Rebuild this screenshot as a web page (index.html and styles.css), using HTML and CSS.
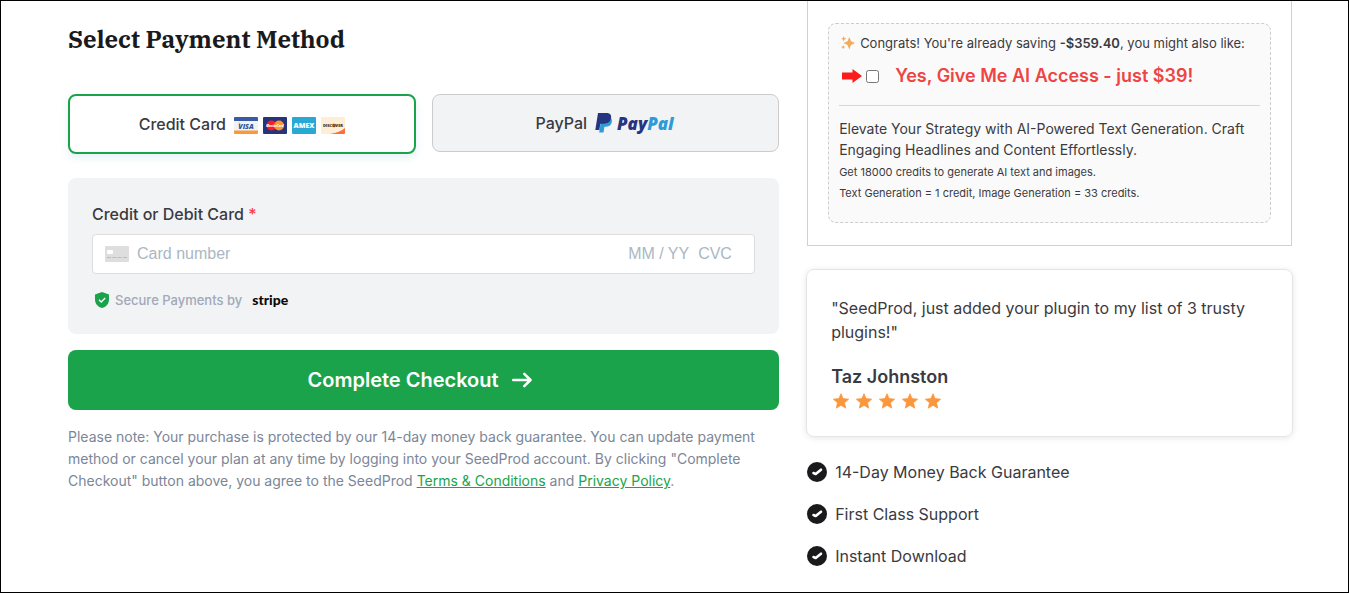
FILE: index.html
```html
<!DOCTYPE html>
<html lang="en">
<head>
<meta charset="utf-8">
<meta name="viewport" content="width=device-width, initial-scale=1">
<title>Checkout</title>
<link rel="stylesheet" href="styles.css">
</head>
<body>
<svg class="defs" aria-hidden="true">
  <symbol id="star" viewBox="0 0 24 24"><path d="M12 2.2l2.8 6.6 7.400.7-5.500 4.900 1.600 7.100-6.300-3.800-6.300 3.800 1.600-7.100-5.500-4.900 7.400-.7z" stroke-width="1" stroke-linejoin="round"/></symbol>
  <symbol id="badge" viewBox="0 0 20 20"><circle cx="10" cy="10" r="10" fill="#1a1a1c"/><path d="M14 7.700L8.700 12 6.500 11" fill="none" stroke="#fff" stroke-width="2.600" stroke-linecap="round" stroke-linejoin="round"/></symbol>
</svg>
<div class="page">
  <main class="payment">
    <h1 class="title">Select Payment Method</h1>
    <div class="methods">
      <button type="button" class="method method-active" aria-pressed="true">
        <span>Credit Card</span>
        <span class="cards">
          <svg class="card" viewBox="0 0 24 17"><rect width="24" height="17" rx="1" fill="#f1f2f4"/><path d="M0 4V1a1 1 0 0 1 1-1h22a1 1 0 0 1 1 1v3z" fill="#3a5ba3"/><path d="M0 13.500h24V16a1 1 0 0 1-1 1H1a1 1 0 0 1-1-1z" fill="#fb993a"/><path d="M4 5.800h2l.6 2z" fill="#f0a040"/><text x="12" y="11.500" class="mark mark-visa">VISA</text></svg>
          <svg class="card" viewBox="0 0 24 17"><rect width="24" height="17" rx="1" fill="#26347b"/><circle cx="8.500" cy="8.500" r="5" fill="#fb1c26"/><circle cx="16" cy="8.500" r="5" fill="#fb9632"/><text x="12" y="10" class="mark mark-mc">MasterCard</text></svg>
          <svg class="card" viewBox="0 0 24 17"><rect width="24" height="17" rx="1" fill="#28a8d2"/><text x="12" y="11" class="mark mark-amex">AMEX</text></svg>
          <svg class="card" viewBox="0 0 24 17"><rect width="24" height="17" rx="1" fill="#feeed6"/><path d="M24 11v5a1 1 0 0 1-1 1H9q10-1.500 15-6z" fill="#f9703c"/><circle cx="13" cy="8.400" r="2" fill="#fb8b30"/><text x="12" y="10" class="mark mark-disc">DISCOVER</text></svg>
        </span>
      </button>
      <button type="button" class="method" aria-pressed="false">
        <span>PayPal</span>
        <svg class="paypal" viewBox="0 0 80 22" aria-hidden="true">
          <path d="M6.500 5h8c2.500 1 2.700 3.200 2.200 5.500-.8 3-3 4.300-6.200 4.300H9.400L8.500 20.500H4.200z" fill="#2c9bd8"/>
          <path d="M3 1h8.500c3.800 0 5.200 2.200 4.500 5.300-.8 3.800-3.500 5.400-7 5.400H6.300c-.8 0-1 .4-1.100 1L4.300 18H.3z" fill="#26357f"/>
          <text x="22" y="18" class="paypal-word"><tspan fill="#26357f">Pay</tspan><tspan fill="#2c9bd8">Pal</tspan></text>
        </svg>
      </button>
    </div>
    <section class="panel">
      <label class="label" for="number">Credit or Debit Card <span class="req">*</span></label>
      <div class="field">
        <svg class="field-icon" viewBox="0 0 24 16" aria-hidden="true"><rect width="24" height="16" rx="1" fill="#dedede"/><rect x="2" y="4" width="6" height="4" rx="1" fill="#fff"/><path d="M2 11.500h20" stroke="#b8bdc2" stroke-width="1" stroke-dasharray="4 1.300"/></svg>
        <input class="number" id="number" type="text" placeholder="Card number">
        <input class="expiry" type="text" placeholder="MM / YY" aria-label="Expiry date">
        <input class="cvc" type="text" placeholder="CVC" aria-label="CVC">
      </div>
      <p class="secure">
        <svg class="shield" viewBox="0 0 14 16" aria-hidden="true"><path d="M7 0l7 2.500v5C14 12 11 15 7 16 3 15 0 12 0 7.500v-5z" fill="#1aa34a"/><path d="M4 7.800l2.200 2.200L10.200 6" fill="none" stroke="#fff" stroke-width="1.300"/></svg>
        <span>Secure Payments by</span>
        <b class="stripe">stripe</b>
      </p>
    </section>
    <button type="button" class="submit">
      <span>Complete Checkout</span>
      <svg class="arrow" viewBox="0 0 20 16" aria-hidden="true"><path d="M1.200 8h17M12.300 1.800L18.500 8l-6.200 6.200" fill="none" stroke="#fff" stroke-width="2.500" stroke-linecap="round" stroke-linejoin="round"/></svg>
    </button>
    <p class="note">Please note: Your purchase is protected by our 14-day money back guarantee. You can update payment method or cancel your plan at any time by logging into your SeedProd account. By clicking "Complete Checkout" button above, you agree to the SeedProd <a href="#">Terms &amp; Conditions</a> and <a href="#">Privacy Policy</a>.</p>
  </main>
  <aside class="side">
    <section class="order">
      <div class="offer">
        <p class="congrats">
          <svg class="sparkle" viewBox="0 0 14 14" aria-hidden="true"><path d="M8.300 1l1.700 4.300L14 7.100 10 8.900l-1.700 4.600-1.800-4.600-4-1.800 4-1.800zM2.700 0l.8 2 1.900.7-1.900.8-.8 1.900-.8-1.900L0 2.700 1.900 2zM2.200 9l.7 1.500 1.500.6-1.500.7-.7 1.500-.7-1.500L0 11.100l1.500-.6z" fill="#f0ac5c"/></svg>
          <span>Congrats! You're already saving <b class="saving">-$359.40</b>, you might also like:</span>
        </p>
        <div class="accept">
          <svg class="pointer" viewBox="0 0 20 14" aria-hidden="true"><path d="M0 3.500h10.500V0L20 7l-9.500 7v-3.500H0z" fill="#fb1c1c"/></svg>
          <input class="check" type="checkbox" id="ai">
          <label class="accept-label" for="ai">Yes, Give Me AI Access - just $39!</label>
        </div>
        <p class="pitch">Elevate Your Strategy with AI-Powered Text Generation. Craft Engaging Headlines and Content Effortlessly.</p>
        <p class="fine">Get 18000 credits to generate AI text and images.<br>Text Generation = 1 credit, Image Generation = 33 credits.</p>
      </div>
    </section>
    <section class="quote">
      <p class="quote-text">"SeedProd, just added your plugin to my list of 3 trusty plugins!"</p>
      <p class="quote-name">Taz Johnston</p>
      <div class="stars" role="img" aria-label="5 stars">
        <svg class="star"><use href="#star"/></svg><svg class="star"><use href="#star"/></svg><svg class="star"><use href="#star"/></svg><svg class="star"><use href="#star"/></svg><svg class="star"><use href="#star"/></svg>
      </div>
    </section>
    <ul class="perks">
      <li class="perk"><svg class="badge"><use href="#badge"/></svg>14-Day Money Back Guarantee</li>
      <li class="perk"><svg class="badge"><use href="#badge"/></svg>First Class Support</li>
      <li class="perk"><svg class="badge"><use href="#badge"/></svg>Instant Download</li>
    </ul>
  </aside>
</div>
</body>
</html>
```

FILE: styles.css
```css
* { box-sizing: border-box; }
html { height: 100%; }
body {
  margin: 0;
  min-height: 100%;
  border: 1px solid #000;
  background: #fff;
  color: #3a3a3f;
  font-family: Inter, "Liberation Sans", sans-serif;
  font-size: 16px;
}
h1, p, ul { margin: 0; padding: 0; }
button, input { font: inherit; color: inherit; }
.defs { display: none; }

.page {
  display: grid;
  grid-template-columns: 22fr 15fr;
  column-gap: 28px;
  padding: 0 56px 0 67px;
}

.payment { padding-top: 22px; }
.title {
  font-family: "IBM Plex Serif", "DejaVu Serif Condensed", "DejaVu Serif", serif;
  font-size: 24px;
  line-height: 32px;
  font-weight: 700;
  color: #1a1a1c;
}
.methods {
  display: grid;
  grid-template-columns: 1fr 1fr;
  gap: 16px;
  align-items: start;
  margin-top: 39px;
}
.method {
  display: flex;
  align-items: center;
  justify-content: center;
  gap: 8px;
  height: 58px;
  padding: 0;
  border: 1px solid #ccc;
  border-radius: 8px;
  background: #f2f3f5;
  font-weight: 500;
}
.method-active {
  height: 60px;
  border: 2px solid #1aa34a;
  background: #fff;
  box-shadow: 0 4px 8px rgba(80, 160, 190, 0.14);
}
.cards { display: flex; gap: 5px; padding-top: 2px; }
.card { width: 24px; height: 17px; }
.mark {
  font-family: "Open Sans", "Liberation Sans", sans-serif;
  font-weight: 800;
  text-anchor: middle;
}
.mark-visa { font-size: 7px; font-style: italic; fill: #2f549c; }
.mark-mc { font-size: 3px; font-style: italic; fill: #fff; }
.mark-amex { font-size: 7px; fill: #fff; }
.mark-disc { font-size: 4px; fill: #333; }
.paypal { width: 80px; height: 22px; }
.paypal-word {
  font-family: "Open Sans", "Liberation Sans", sans-serif;
  font-size: 17px;
  font-weight: 800;
  font-style: italic;
}

.panel {
  margin-top: 24px;
  padding: 24px;
  border-radius: 8px;
  background: #f2f3f5;
}
.label {
  display: block;
  margin-bottom: 8px;
  font-weight: 500;
  line-height: 24px;
}
.req { color: #fb3b46; }
.field {
  display: flex;
  align-items: center;
  height: 40px;
  padding: 0 12px;
  border: 1px solid #ddd;
  border-radius: 4px;
  background: #fff;
  font-family: "Liberation Sans", Arial, sans-serif;
}
.field-icon { flex: none; width: 24px; height: 16px; margin-right: 8px; }
.field input {
  min-width: 0;
  padding: 0;
  border: 0;
  outline: 0;
  background: none;
}
.field input::placeholder { color: #aab7c4; opacity: 1; }
.number { flex: 1; }
.expiry { width: 70px; }
.cvc { width: 44px; }
.secure {
  display: flex;
  align-items: center;
  margin-top: 16px;
  padding-left: 3px;
  font-size: 13px;
  line-height: 20px;
  font-weight: 500;
  color: #a0a9b8;
}
.shield { width: 14px; height: 16px; margin-right: 6px; }
.stripe {
  margin-left: 10px;
  font-family: Lato, "Noto Sans", sans-serif;
  font-size: 14px;
  font-weight: 900;
  color: #0a0a0a;
}

.submit {
  display: flex;
  align-items: center;
  justify-content: center;
  gap: 13px;
  width: 100%;
  height: 60px;
  margin-top: 16px;
  padding: 0 8px 0 0;
  border: 0;
  border-radius: 8px;
  background: #1aa34a;
  color: #fff;
  font-size: 20px;
  font-weight: 600;
}
.arrow { width: 20px; height: 16px; }
.note {
  margin-top: 16px;
  font-size: 14px;
  line-height: 22px;
  color: #7b8698;
}
.note a { color: #1aa34a; }

.order {
  padding: 22px 20px;
  border: 1px solid #d2d2d4;
  border-top: 0;
}
.offer {
  min-height: 200px;
  padding: 9px 10px;
  border: 1px dashed #ccc;
  border-radius: 8px;
  background: #fafafa;
}
.congrats {
  display: flex;
  align-items: center;
  gap: 5px;
  padding-left: 2px;
  font-size: 13px;
  line-height: 20px;
}
.saving { font-weight: 600; }
.sparkle { flex: none; width: 14px; height: 14px; }
.accept {
  display: flex;
  align-items: center;
  padding: 9px 0 15px 3px;
  border-bottom: 1px solid #f5d48e;
}
.pointer { flex: none; width: 20px; height: 14px; }
.check { flex: none; width: 13px; height: 13px; margin: 0 16px 0 4px; }
.accept-label {
  font-size: 18px;
  line-height: 28px;
  font-weight: 600;
  color: #ef4444;
}
.pitch {
  margin: 12px 0 2px;
  font-size: 14px;
  line-height: 21px;
}
.fine { font-size: 11px; line-height: 21px; }

.quote {
  margin: 23px -1px 0;
  padding: 26px 24px;
  border: 1px solid #e5e5e7;
  border-radius: 8px;
  box-shadow: 0 1px 6px rgba(0, 0, 0, 0.1);
}
.quote-text { line-height: 24px; }
.quote-name {
  margin-top: 21px;
  font-size: 18px;
  line-height: 24px;
  font-weight: 600;
}
.stars { display: flex; gap: 5px; padding: 3px 0 0 1px; }
.star { width: 18px; height: 18px; fill: #fb963c; stroke: #fb963c; }
.perks { list-style: none; margin-top: 23px; }
.perk {
  display: flex;
  align-items: center;
  gap: 8px;
  margin-bottom: 18px;
  line-height: 24px;
}
.perk:last-child { margin-bottom: 0; }
.badge { width: 20px; height: 20px; }
```
